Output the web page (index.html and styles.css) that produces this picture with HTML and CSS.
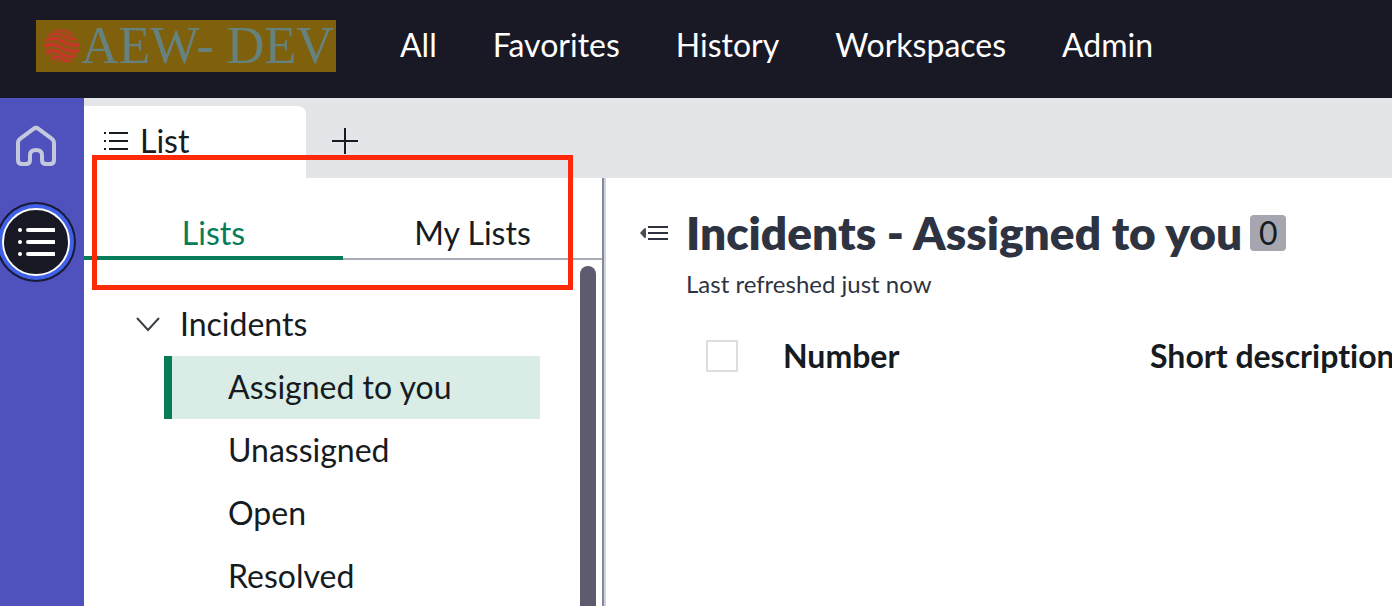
FILE: index.html
```html
<!DOCTYPE html>
<html lang="en">
<head>
    <meta charset="UTF-8">
    <meta name="viewport" content="width=device-width, initial-scale=1.0">
    <title>Incidents - Assigned to you</title>
    <link rel="stylesheet" href="styles.css">
</head>
<body>
    <header class="header">
        <a href="#" class="logo">
            <svg class="logo-globe" viewBox="0 0 38 38" fill="none" stroke="#d0342c" stroke-linecap="round">
                <circle cx="19" cy="19" r="17" fill="#c8382c" fill-opacity="0.3" stroke="none"/>
                <path d="M10 4 Q20 2 29 7" stroke-width="1"/>
                <path d="M6 8 Q14 5 21 9 T33 12" stroke-width="1.5"/>
                <path d="M3 13 Q11 9 19 14 T35 18" stroke-width="2.5"/>
                <path d="M2 19 Q8 15 17 20 T35 24" stroke-width="2.5"/>
                <path d="M4 26 Q9 21 17 26 T32 29" stroke-width="2.5"/>
                <path d="M9 32 Q12 28 18 31 T27 34" stroke-width="2"/>
            </svg>
            <span class="logo-text">AEW- DEV</span>
        </a>
        <nav class="main-nav">
            <a href="#">All</a>
            <a href="#">Favorites</a>
            <a href="#">History</a>
            <a href="#">Workspaces</a>
            <a href="#">Admin</a>
        </nav>
    </header>

    <div class="layout">
        <aside class="sidebar">
            <button class="side-btn" aria-label="Home">
                <svg width="44" height="44" viewBox="0 0 44 44" fill="none" stroke="#c3c8dd" stroke-width="4" stroke-linejoin="round">
                    <path d="M4 19 Q4 16.500 6 14.800 L19.500 4.800 Q22 3 24.500 4.800 L38 14.800 Q40 16.500 40 19 V36 Q40 40 36 40 H32 Q28 40 28 36 V31 Q28 26 22 26 Q16 26 16 31 V36 Q16 40 12 40 H8 Q4 40 4 36 Z"/>
                </svg>
            </button>
            <button class="side-btn side-btn-active" aria-label="List">
                <svg width="38" height="32" viewBox="0 0 38 32" stroke="#fff" stroke-width="4" stroke-linecap="round">
                    <path d="M3 4h.01M3 16h.01M3 28h.01M11 4h26M11 16h26M11 28h26"/>
                </svg>
            </button>
        </aside>

        <main class="workspace">
            <div class="tab-bar">
                <button class="page-tab">
                    <svg width="24" height="20" viewBox="0 0 24 20" stroke="#161b1f" stroke-width="2">
                        <path d="M0 2h2M0 10h2M0 18h2M5 2h19M5 10h19M5 18h19"/>
                    </svg>
                    List
                </button>
                <button class="add-tab" aria-label="Add tab">
                    <svg width="26" height="26" viewBox="0 0 26 26" stroke="#161b1f" stroke-width="2">
                        <path d="M0 13h26M13 0v26"/>
                    </svg>
                </button>
            </div>

            <div class="panels">
                <section class="list-panel">
                    <div class="list-tabs">
                        <button class="list-tab list-tab-active">Lists</button>
                        <button class="list-tab">My Lists</button>
                    </div>
                    <div class="list-body">
                        <div class="tree">
                            <button class="tree-group">
                                <svg width="24" height="16" viewBox="0 0 24 16" fill="none" stroke="#3a4047" stroke-width="2">
                                    <path d="M1 2l11 12L23 2"/>
                                </svg>
                                Incidents
                            </button>
                            <ul class="tree-items">
                                <li><a href="#" class="tree-item tree-item-active">Assigned to you</a></li>
                                <li><a href="#" class="tree-item">Unassigned</a></li>
                                <li><a href="#" class="tree-item">Open</a></li>
                                <li><a href="#" class="tree-item">Resolved</a></li>
                            </ul>
                        </div>
                        <div class="scrollbar"></div>
                    </div>
                </section>

                <section class="content">
                    <div class="content-header">
                        <button class="collapse-btn" aria-label="Collapse list panel">
                            <svg width="28" height="16" viewBox="0 0 28 16" stroke="#2e3240" stroke-width="2">
                                <path d="M8 2h20M8 8h20M8 14h20"/>
                                <path d="M0 8l4-4.500q2-1.500 2 1v7q0 2.500-2 1z" fill="#4a4e55" stroke="none"/>
                            </svg>
                        </button>
                        <h1>Incidents - Assigned to you</h1>
                        <span class="count">0</span>
                    </div>
                    <p class="refreshed">Last refreshed just now</p>
                    <table class="records">
                        <thead>
                            <tr>
                                <th class="col-check"><input type="checkbox" class="checkbox" aria-label="Select all"></th>
                                <th class="col-number">Number</th>
                                <th>Short description</th>
                            </tr>
                        </thead>
                    </table>
                </section>
            </div>

            <div class="highlight"></div>
        </main>
    </div>
</body>
</html>
```
FILE: styles.css
```css
* {
    box-sizing: border-box;
}

body {
    margin: 0;
    height: 100vh;
    display: flex;
    flex-direction: column;
    overflow: hidden;
    font-family: Lato, sans-serif;
    font-size: 32px;
    line-height: 40px;
    font-variant-ligatures: none;
    color: #161b1f;
    background: #fff;
}

a {
    color: inherit;
    text-decoration: none;
}

button {
    font: inherit;
    font-variant-ligatures: none;
    color: inherit;
    background: none;
    border: none;
    padding: 0;
    cursor: pointer;
}

svg {
    display: block;
    flex-shrink: 0;
}

.header {
    display: flex;
    align-items: center;
    gap: 64px;
    padding: 20px 36px 26px;
    background: #191926;
    color: #fff;
}

.logo {
    display: flex;
    align-items: center;
    width: 300px;
    height: 52px;
    padding-left: 7px;
    background: #7f600c;
    color: #66827f;
    white-space: nowrap;
}

.logo-globe {
    width: 38px;
    height: 38px;
}

.logo-text {
    font-family: "Liberation Serif", serif;
    font-size: 52px;
}

.main-nav {
    display: flex;
    gap: 56px;
    padding-bottom: 2px;
    white-space: nowrap;
}

.layout {
    flex: 1;
    display: flex;
    min-height: 0;
}

.sidebar {
    width: 84px;
    flex-shrink: 0;
    display: flex;
    flex-direction: column;
    align-items: center;
    gap: 40px;
    padding: 26px 12px 0 0;
    background: #4f52bd;
}

.side-btn {
    display: flex;
    align-items: center;
    justify-content: center;
}

.side-btn-active {
    width: 68px;
    height: 68px;
    border: 2px solid #fff;
    border-radius: 50%;
    background: #191926;
    box-shadow: 0 0 0 4px #4060e8, 0 0 0 6px #191936;
}

.workspace {
    position: relative;
    flex: 1;
    min-width: 0;
    display: flex;
    flex-direction: column;
}

.tab-bar {
    display: flex;
    align-items: stretch;
    padding-top: 8px;
    background: #e4e5e9;
}

.page-tab {
    display: flex;
    align-items: center;
    gap: 12px;
    width: 222px;
    height: 72px;
    padding: 0 0 2px 20px;
    background: #fff;
    border-top-right-radius: 8px;
}

.add-tab {
    padding: 0 26px 2px;
}

.panels {
    flex: 1;
    display: flex;
    min-height: 0;
}

.list-panel {
    width: 522px;
    flex-shrink: 0;
    display: flex;
    flex-direction: column;
    border-right: 2px solid #d0d3e0;
    box-shadow: inset -2px 0 #848a9b;
    padding-right: 2px;
}

.list-tabs {
    display: flex;
}

.list-tab {
    flex: 1;
    height: 82px;
    padding-top: 30px;
    border-bottom: 2px solid #a9adb8;
}

.list-tab-active {
    padding-top: 32px;
    color: #067d58;
    border-bottom: 4px solid #067d58;
}

.list-body {
    flex: 1;
    display: flex;
    min-height: 0;
    padding: 6px 6px 0 0;
}

.tree {
    flex: 1;
    padding: 26px 40px 0 52px;
    overflow: hidden;
}

.tree-group {
    display: flex;
    align-items: center;
    gap: 20px;
    height: 64px;
}

.tree-items {
    list-style: none;
    margin: 0;
    padding: 0 0 0 28px;
}

.tree-item {
    display: flex;
    align-items: center;
    height: 63px;
    padding: 0 0 2px 56px;
    border-left: 8px solid transparent;
}

.tree-item-active {
    background: #d9ece5;
    border-left-color: #067d58;
}

.scrollbar {
    width: 16px;
    background: #5d5b6d;
    border-radius: 8px 8px 0 0;
}

.content {
    flex: 1;
    min-width: 0;
    padding: 24px 0 0 34px;
    overflow: hidden;
}

.content-header {
    display: flex;
    align-items: center;
    height: 62px;
    white-space: nowrap;
}

.content-header h1 {
    margin: 0 8px 0 18px;
    font-size: 46px;
    font-weight: 800;
    color: #2e3342;
}

.count {
    width: 36px;
    height: 36px;
    line-height: 36px;
    text-align: center;
    background: #a5a6af;
    border-radius: 4px;
}

.refreshed {
    margin: 0 0 32px 46px;
    font-size: 24px;
    color: #2e3342;
}

.records {
    width: 100%;
    margin-left: 66px;
    table-layout: fixed;
    border-collapse: collapse;
    text-align: left;
    white-space: nowrap;
}

.records th {
    padding: 0;
}

.col-check {
    width: 77px;
}

.col-number {
    width: 367px;
}

.checkbox {
    appearance: none;
    display: block;
    width: 32px;
    height: 32px;
    margin: 0;
    border: 2px solid #dcdee1;
    background: #fff;
}

.highlight {
    position: absolute;
    top: 57px;
    left: 8px;
    width: 481px;
    height: 135px;
    border: 5px solid #fc2a08;
    pointer-events: none;
}
```
